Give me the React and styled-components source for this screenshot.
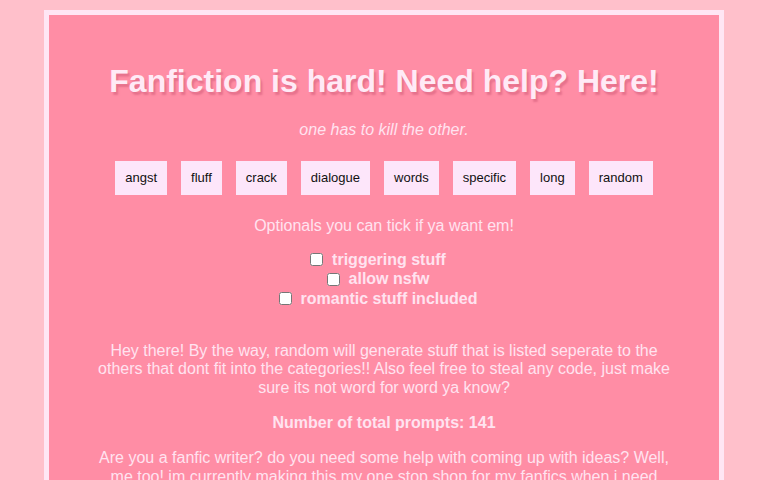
import React from "react";
import styled, { createGlobalStyle } from "styled-components";

const GlobalStyle = createGlobalStyle`
  body {
    margin: 0;
    background: #ffc0cb;
    font-family: "Liberation Sans", Arial, sans-serif;
  }
`;

const categories = [
  "angst",
  "fluff",
  "crack",
  "dialogue",
  "words",
  "specific",
  "long",
  "random",
];

const options = ["triggering stuff", "allow nsfw", "romantic stuff included"];

export default function App() {
  return (
    <>
      <GlobalStyle />
      <Card>
        <Title>Fanfiction is hard! Need help? Here!</Title>
        <Tagline>one has to kill the other.</Tagline>
        <ButtonRow>
          {categories.map((c) => (
            <PromptButton key={c}>{c}</PromptButton>
          ))}
        </ButtonRow>
        <Hint>Optionals you can tick if ya want em!</Hint>
        <Options>
          {options.map((o) => (
            <Option key={o}>
              <input type="checkbox" />
              <span>{o}</span>
            </Option>
          ))}
        </Options>
        <Text>
          Hey there! By the way, random will generate stuff that is listed
          seperate to the others that dont fit into the categories!! Also feel
          free to steal any code, just make sure its not word for word ya know?
        </Text>
        <Count>Number of total prompts: 141</Count>
        <Text>
          Are you a fanfic writer? do you need some help with coming up with
          ideas? Well, me too! im currently making this my one stop shop for my
          fanfics when i need inspiration, so expect it to grow!
        </Text>
      </Card>
    </>
  );
}

const Card = styled.div`
  width: 680px;
  margin: 10px auto 0;
  border: 5px solid #ffe6f4;
  border-bottom: none;
  background: #ff8da5;
  color: #ffe3f0;
  padding: 0 48px 40px;
  box-sizing: border-box;
  text-align: center;
`;

const Title = styled.h1`
  margin: 46px -20px 0;
  font-size: 32px;
  line-height: 40px;
  font-weight: 700;
  white-space: nowrap;
  color: #ffeaf6;
  text-shadow: 2px 3px 2px #e6718c;
`;

const Tagline = styled.p`
  margin: 20px 0 0;
  font-size: 16px;
  line-height: 18px;
  font-style: italic;
`;

const ButtonRow = styled.div`
  display: flex;
  justify-content: center;
  gap: 14px;
  margin-top: 22px;
`;

const PromptButton = styled.button`
  border: none;
  background: #fde6fa;
  color: #111;
  font-family: "Liberation Sans", Arial, sans-serif;
  font-size: 13px;
  line-height: 14px;
  padding: 10px;
  cursor: pointer;
`;

const Hint = styled.p`
  margin: 22px 0 0;
  font-size: 16px;
  line-height: 18px;
`;

const Options = styled.div`
  margin-top: 15px;
  display: flex;
  flex-direction: column;
  align-items: center;
`;

const Option = styled.label`
  display: flex;
  align-items: center;
  height: 19.5px;
  padding-right: 12px;
  font-size: 16px;
  font-weight: 700;

  input {
    margin: 0 9px 0 0;
    width: 13px;
    height: 13px;
  }
`;

const Text = styled.p`
  margin: 33px 0 0;
  font-size: 16px;
  line-height: 18.5px;
`;

const Count = styled.p`
  margin: 17px 0 17px;
  font-size: 16px;
  line-height: 18px;
  font-weight: 700;

  & + p {
    margin-top: 0;
  }
`;
